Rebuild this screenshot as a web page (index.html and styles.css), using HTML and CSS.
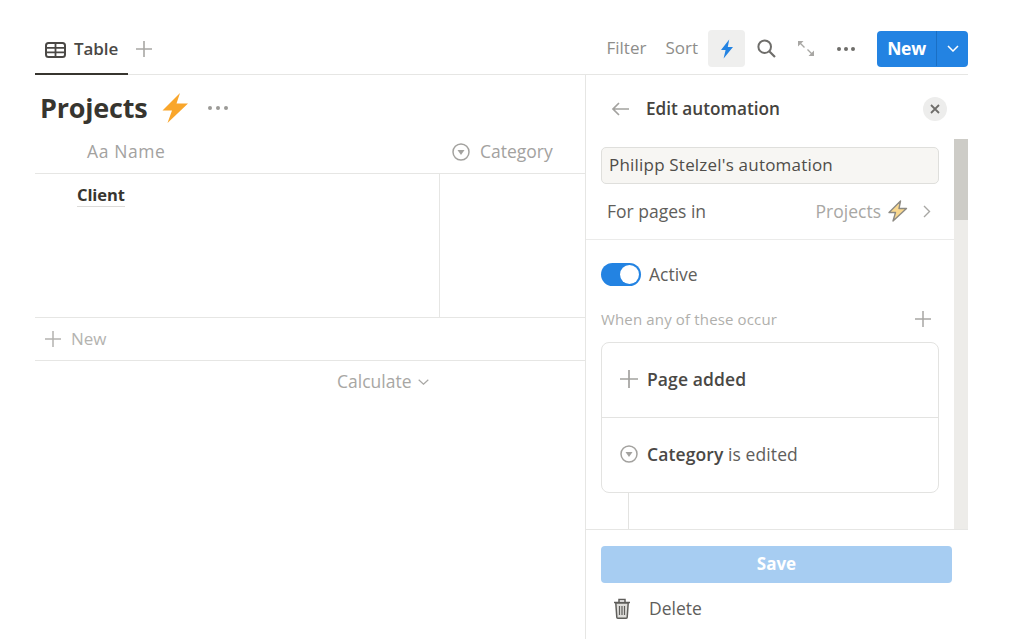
FILE: index.html
```html
<!DOCTYPE html>
<html lang="en">
<head>
  <meta charset="UTF-8">
  <meta name="viewport" content="width=device-width, initial-scale=1.0">
  <title>Projects</title>
  <link rel="stylesheet" href="styles.css">
</head>
<body>
  <div class="app">
    <div class="topbar">
      <div class="tab">
        <svg class="tab-icon" width="21" height="16" viewBox="0 0 21 16"><rect x="1" y="1" width="19" height="14" rx="2.5" fill="none" stroke="#4a4845" stroke-width="2"/><path d="M1 5.8h19M1 10.4h19M10.5 1v14" stroke="#4a4845" stroke-width="1.8"/></svg>
        <span>Table</span>
      </div>
      <svg class="tab-add" width="16" height="16" viewBox="0 0 16 16"><path d="M8 0v16M0 8h16" stroke="#a8a7a4" stroke-width="1.6"/></svg>
      <div class="actions">
        <span class="action-text filter">Filter</span>
        <span class="action-text sort">Sort</span>
        <div class="bolt-btn">
          <svg width="14" height="20" viewBox="0 0 14 19"><path d="M9.2 0 1 10.6h4.6L3.6 19 13 7.6H7.8z" fill="#2383e2"/></svg>
        </div>
        <svg class="search" width="19" height="19" viewBox="0 0 19 19"><circle cx="7.7" cy="7.7" r="6.3" fill="none" stroke="#6e6d6a" stroke-width="2"/><path d="M12.2 12.2 18 18" stroke="#6e6d6a" stroke-width="2.2"/></svg>
        <svg class="expand" width="18" height="17" viewBox="0 0 18 17"><path d="M1 1h5.5L1 6.5zM17 16h-5.5L17 10.5z" fill="#a8a7a4"/><path d="M3 3l4.5 4.5M15 14l-4.5-4.5" stroke="#a8a7a4" stroke-width="1.4"/></svg>
        <div class="dots"><i></i><i></i><i></i></div>
        <div class="new-btn">
          <span class="new-label">New</span>
          <span class="new-arrow"><svg width="12" height="7" viewBox="0 0 12 7"><path d="M1 1l5 5 5-5" fill="none" stroke="#fff" stroke-width="1.5"/></svg></span>
        </div>
      </div>
    </div>

    <div class="main">
      <div class="left">
        <div class="title-row">
          <h1 class="title">Projects</h1>
          <svg class="title-bolt" width="28" height="30" viewBox="0 0 28 30"><path d="M19 0 1.5 17.5H11L6.500 30 27 10.500H15.500z" fill="#f9a62b"/></svg>
          <div class="dots title-dots"><i></i><i></i><i></i></div>
        </div>
        <div class="table-head">
          <span class="col-name">Aa Name</span>
          <span class="col-cat">
            <svg width="18" height="18" viewBox="0 0 18 18"><circle cx="9" cy="9" r="8" fill="none" stroke="#a3a29f" stroke-width="1.5"/><path d="M5.500 7h7L9 12z" fill="#a3a29f"/></svg>
            Category
          </span>
        </div>
        <div class="table-row">
          <div class="cell-name"><span class="client">Client</span></div>
          <div class="cell-cat"></div>
        </div>
        <div class="new-row">
          <svg width="16" height="16" viewBox="0 0 16 16"><path d="M8 0v16M0 8h16" stroke="#b4b3b0" stroke-width="1.5"/></svg>
          <span class="new-text">New</span>
        </div>
        <div class="calc-row">
          <span class="calc-text">Calculate</span>
          <svg width="11" height="6" viewBox="0 0 11 6"><path d="M.7.7l4.800 4.500L10.300.7" fill="none" stroke="#a8a7a4" stroke-width="1.2"/></svg>
        </div>
      </div>

      <div class="panel">
        <div class="panel-head">
          <svg width="18" height="14" viewBox="0 0 18 14"><path d="M18 7H2M8 1 2 7l6 6" fill="none" stroke="#a3a29f" stroke-width="1.7"/></svg>
          <span class="panel-title">Edit automation</span>
          <div class="close-btn">
            <svg width="10" height="10" viewBox="0 0 10 10"><path d="M1 1l8 8M9 1 1 9" stroke="#6e6d6a" stroke-width="1.8"/></svg>
          </div>
        </div>

        <div class="panel-scroll">
          <div class="panel-body">
            <div class="top-section">
              <div class="name-input">Philipp Stelzel's automation</div>
              <div class="pages-row">
                <span>For pages in</span>
                <span class="pages-value">
                  Projects
                  <svg width="21" height="22" viewBox="0 0 21 22"><path d="M13.500 1 2 12.500h6.500L6 21 19.500 8.500H12z" fill="#f9d88f" stroke="#8d8a83" stroke-width="1.4" stroke-linejoin="round"/></svg>
                  <svg class="pages-chevron" width="8" height="13" viewBox="0 0 8 13"><path d="M1 1l5.500 5.500L1 12" fill="none" stroke="#a8a7a4" stroke-width="1.4"/></svg>
                </span>
              </div>
            </div>
            <div class="bottom-section">
              <div class="active-row">
                <div class="toggle"><div class="knob"></div></div>
                <span class="active-text">Active</span>
              </div>
              <div class="when-row">
                <span>When any of these occur</span>
                <svg width="16" height="16" viewBox="0 0 16 16"><path d="M8 0v16M0 8h16" stroke="#a8a7a4" stroke-width="1.5"/></svg>
              </div>
              <div class="trigger-card">
                <div class="trigger">
                  <svg width="18" height="18" viewBox="0 0 18 18"><path d="M9 0v18M0 9h18" stroke="#a3a29f" stroke-width="1.7"/></svg>
                  <span><b>Page added</b></span>
                </div>
                <div class="trigger">
                  <svg width="18" height="18" viewBox="0 0 18 18"><circle cx="9" cy="9" r="8" fill="none" stroke="#a3a29f" stroke-width="1.5"/><path d="M5.500 7h7L9 12z" fill="#a3a29f"/></svg>
                  <span><b>Category</b> is edited</span>
                </div>
              </div>
              <div class="connector"></div>
            </div>
          </div>
          <div class="scrollbar"><div class="thumb"></div></div>
        </div>

        <div class="panel-foot">
          <div class="save-btn">Save</div>
          <div class="delete-row">
            <svg width="18" height="21" viewBox="0 0 18 21"><path d="M1 4.500h16M6 4V1.500h6V4" fill="none" stroke="#5f5e5b" stroke-width="1.5"/><path d="M2.800 5l1 14.200c0 .6.500 1 1 1h8.400c.5 0 1-.4 1-1l1-14.200z" fill="#dfdedb" stroke="#5f5e5b" stroke-width="1.5"/><path d="M6.500 8v9M9 8v9M11.500 8v9" stroke="#5f5e5b" stroke-width="1.2"/></svg>
            <span>Delete</span>
          </div>
        </div>
      </div>
    </div>
  </div>
</body>
</html>
```

FILE: styles.css
```css
* {
  box-sizing: border-box;
}
body {
  margin: 0;
  background: #fff;
  font-family: "Open Sans", "Noto Sans", sans-serif;
  color: #37352f;
  overflow: hidden;
}
.app {
  width: 933px;
  height: 639px;
  margin-left: 35px;
  padding-top: 30px;
  display: flex;
  flex-direction: column;
}
.topbar {
  height: 45px;
  flex: none;
  display: flex;
  align-items: flex-start;
  border-bottom: 1px solid #e6e6e4;
}
.tab {
  width: 93px;
  height: 45px;
  padding: 9px 0 0 10px;
  display: flex;
  align-items: flex-start;
  gap: 8px;
  font-size: 17px;
  line-height: 19px;
  font-weight: 600;
  letter-spacing: -0.1px;
  color: #4a4845;
  border-bottom: 2px solid #37352f;
}
.tab-icon {
  margin-top: 3px;
}
.tab-add {
  margin: 11px 0 0 8px;
}
.actions {
  margin-left: auto;
  display: flex;
  align-items: center;
  height: 37px;
}
.action-text {
  font-size: 17px;
  line-height: 36px;
  height: 37px;
  color: #8e8d8a;
}
.filter {
  margin-right: 19px;
}
.sort {
  margin-right: 10px;
}
.bolt-btn {
  width: 37px;
  height: 37px;
  background: #efefee;
  border-radius: 4px;
  display: flex;
  align-items: center;
  justify-content: center;
}
.search {
  margin-left: 12px;
}
.expand {
  margin-left: 21px;
}
.dots {
  display: flex;
  gap: 3px;
}
.dots i {
  width: 4px;
  height: 4px;
  border-radius: 50%;
  background: #6e6d6a;
}
.actions .dots {
  margin-left: 22px;
}
.new-btn {
  margin-left: 22px;
  width: 91px;
  height: 36px;
  border-radius: 4px;
  background: #2383e2;
  color: #fff;
  display: flex;
  align-items: center;
  font-weight: 700;
  font-size: 17.5px;
  letter-spacing: -0.3px;
}
.new-label {
  width: 60px;
  text-align: center;
  border-right: 1px solid #1a6fc4;
  line-height: 35px;
}
.new-arrow {
  flex: 1;
  display: flex;
  justify-content: center;
}
.main {
  flex: 1;
  display: flex;
  min-height: 0;
}
.left {
  width: 550px;
  flex: none;
}
.title-row {
  height: 68px;
  padding: 15px 0 0 5px;
  display: flex;
  align-items: flex-start;
}
.title {
  margin: 0;
  font-size: 27px;
  line-height: 36px;
  font-weight: 700;
  letter-spacing: -0.2px;
  color: #37352f;
}
.title-bolt {
  margin: 3px 0 0 13px;
}
.title-dots {
  margin: 16px 0 0 19px;
  gap: 4px;
}
.title-dots i {
  background: #9b9a97;
}
.table-head {
  height: 31px;
  display: flex;
  border-bottom: 1px solid #e6e6e4;
  font-size: 17.5px;
  line-height: 16px;
  color: #a3a29f;
}
.col-name {
  width: 405px;
  padding-left: 52px;
  letter-spacing: 0.6px;
}
.col-cat {
  padding-left: 12px;
  display: flex;
  align-items: flex-start;
  gap: 10px;
}
.table-row {
  height: 144px;
  display: flex;
  border-bottom: 1px solid #e6e6e4;
}
.cell-name {
  width: 405px;
  padding: 10px 0 0 42px;
  border-right: 1px solid #e6e6e4;
}
.client {
  font-size: 16.5px;
  font-weight: 700;
  line-height: 22px;
  letter-spacing: -0.1px;
  color: #37352f;
  display: inline-block;
  border-bottom: 1px solid #dcdbd9;
}
.new-row {
  height: 43px;
  padding-left: 10px;
  display: flex;
  align-items: center;
  gap: 10px;
  border-bottom: 1px solid #e6e6e4;
  font-size: 17px;
  color: #b4b3b0;
}
.new-text {
  margin-top: -2px;
}
.calc-row {
  height: 42px;
  padding-left: 302px;
  display: flex;
  align-items: center;
  gap: 6px;
  font-size: 17.5px;
  color: #a8a7a4;
}
.calc-text {
  margin-top: -2px;
}
.panel {
  width: 383px;
  flex: none;
  display: flex;
  flex-direction: column;
  border-left: 1px solid #e6e6e4;
}
.panel-head {
  height: 64px;
  flex: none;
  display: flex;
  align-items: center;
  padding: 4px 21px 0 25px;
  gap: 17px;
}
.panel-title {
  font-size: 17.2px;
  font-weight: 600;
  color: #45433e;
  margin-top: -2px;
}
.close-btn {
  margin-left: auto;
  width: 24px;
  height: 24px;
  border-radius: 50%;
  background: #ededec;
  display: flex;
  align-items: center;
  justify-content: center;
}
.panel-scroll {
  flex: 1;
  min-height: 0;
  display: flex;
  overflow: hidden;
}
.panel-body {
  flex: 1;
  min-width: 0;
}
.top-section {
  height: 101px;
  padding: 8px 15px 0 15px;
  border-bottom: 1px solid #ebebea;
}
.name-input {
  height: 37px;
  line-height: 33px;
  padding-left: 7px;
  font-size: 17px;
  letter-spacing: 0.2px;
  color: #4f4d49;
  background: #f7f6f3;
  border: 1px solid #dfdfdc;
  border-radius: 5px;
}
.pages-row {
  height: 54px;
  padding: 0 8px 0 6px;
  display: flex;
  align-items: center;
  justify-content: space-between;
  font-size: 17.5px;
  color: #5f5e5b;
}
.pages-value {
  display: flex;
  align-items: center;
  gap: 6px;
  font-size: 17.5px;
  color: #a8a7a4;
}
.pages-chevron {
  margin-left: 9px;
}
.bottom-section {
  padding: 23px 15px 0 15px;
}
.active-row {
  height: 23px;
  display: flex;
  align-items: center;
  gap: 8px;
  font-size: 17.5px;
  color: #5f5e5b;
}
.active-text {
  margin-top: -2px;
}
.toggle {
  width: 40px;
  height: 23px;
  border-radius: 12px;
  background: #2383e2;
  display: flex;
  justify-content: flex-end;
  align-items: center;
  padding-right: 2px;
}
.knob {
  width: 19px;
  height: 19px;
  border-radius: 50%;
  background: #fff;
}
.when-row {
  height: 56px;
  padding: 10px 8px 0 0;
  display: flex;
  align-items: center;
  justify-content: space-between;
  font-size: 15px;
  font-weight: 500;
  letter-spacing: 0.15px;
  color: #b0afac;
}
.trigger-card {
  height: 151px;
  border: 1px solid #e3e3e1;
  border-radius: 8px;
}
.trigger {
  height: 74px;
  padding: 0 0 3px 18px;
  display: flex;
  align-items: center;
  gap: 9px;
  font-size: 17.5px;
  letter-spacing: 0.1px;
  color: #5f5e5b;
}
.trigger + .trigger {
  height: 75px;
  border-top: 1px solid #e3e3e1;
}
.trigger b {
  font-weight: 600;
  color: #4a4845;
}
.connector {
  width: 1px;
  height: 37px;
  margin-left: 27px;
  background: #e3e3e1;
}
.scrollbar {
  width: 14px;
  flex: none;
  background: #edece9;
}
.thumb {
  height: 81px;
  background: #cdccc7;
}
.panel-foot {
  height: 110px;
  flex: none;
  padding: 16px 16px 0 15px;
  border-top: 1px solid #e6e6e4;
}
.save-btn {
  height: 37px;
  line-height: 35px;
  text-align: center;
  border-radius: 4px;
  background: #a7cdf2;
  color: #fff;
  font-size: 17px;
  font-weight: 700;
}
.delete-row {
  height: 50px;
  padding-left: 12px;
  display: flex;
  align-items: center;
  gap: 18px;
  font-size: 17.5px;
  color: #5f5e5b;
}
```
